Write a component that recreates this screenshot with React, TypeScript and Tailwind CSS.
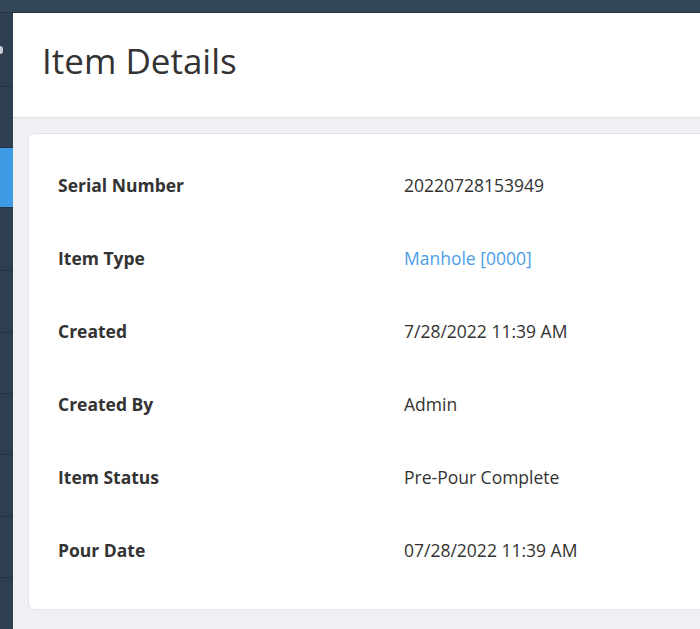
const rows = [
  { label: "Serial Number", value: "20220728153949" },
  { label: "Item Type", value: "Manhole [0000]", link: true },
  { label: "Created", value: "7/28/2022 11:39 AM" },
  { label: "Created By", value: "Admin" },
  { label: "Item Status", value: "Pre-Pour Complete" },
  { label: "Pour Date", value: "07/28/2022 11:39 AM" },
]

const navHeights = ["h-[74px]", "h-[61px]", "h-[60px]", "h-[63px]", "h-[62px]", "h-[61px]", "h-[61px]", "h-[62px]", "h-[61px]", "h-[61px]"]

export default function App() {
  return (
    <div
      className="flex h-[629px] w-[700px] flex-col overflow-hidden bg-[#efeff4]"
      style={{ fontFamily: '"Open Sans", sans-serif' }}
    >
      {/* Top bar */}
      <div className="h-[13px] shrink-0 border-b border-[#27333f] bg-[#34465a]" />

      <div className="flex min-h-0 flex-1">
        {/* Sidebar */}
        <aside className="w-[13px] shrink-0 overflow-hidden bg-[#2f3f52]">
          {navHeights.map((h, i) => (
            <div
              key={i}
              className={`${h} relative border-b border-[#27343f] ${
                i === 2 ? "bg-[#3d9be5]" : ""
              }`}
            >
              {i === 0 && (
                <div className="absolute left-0 top-[33px] h-[8px] w-[3px] rounded-r-sm bg-[#c9ced4]" />
              )}
            </div>
          ))}
        </aside>

        {/* Content */}
        <main className="min-w-0 flex-1">
          <header className="flex h-[105px] items-center border-b border-[#e2e2e8] bg-white pl-[29px]">
            <h1 className="pb-[10px] text-[35px] font-normal leading-none text-[#333]">
              Item Details
            </h1>
          </header>

          <div className="pl-[15px] pt-[15px]">
            <div className="h-[477px] rounded-l-md border border-r-0 border-[#e3e3e8] bg-white pl-[29px] pt-[15px]">
              {rows.map((row) => (
                <div
                  key={row.label}
                  className="grid h-[73px] grid-cols-[346px_1fr] items-center text-[17.5px] text-[#333]"
                >
                  <span className="font-bold">{row.label}</span>
                  <span className={row.link ? "text-[#4a9ee6]" : ""}>
                    {row.value}
                  </span>
                </div>
              ))}
            </div>
          </div>
        </main>
      </div>
    </div>
  )
}
